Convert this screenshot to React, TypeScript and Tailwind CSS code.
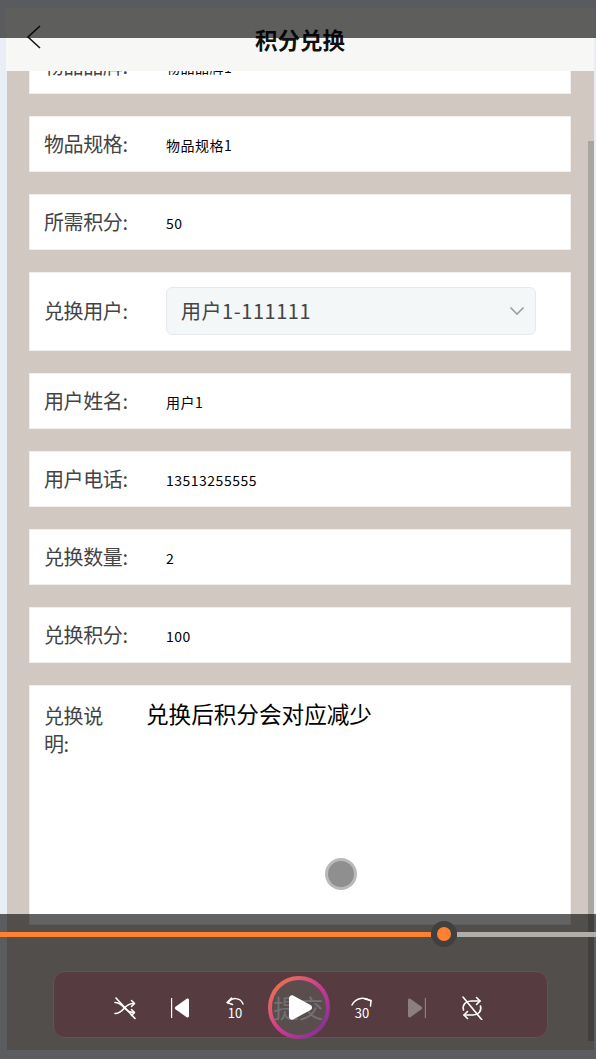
const labelFont = { fontFamily: '"Noto Sans CJK SC", sans-serif' };

const rowsBefore = [
  { label: '物品品牌:', value: '物品品牌1' },
  { label: '物品规格:', value: '物品规格1' },
  { label: '所需积分:', value: '50' },
];
const rowsAfter = [
  { label: '用户姓名:', value: '用户1' },
  { label: '用户电话:', value: '13513255555' },
  { label: '兑换数量:', value: '2' },
  { label: '兑换积分:', value: '100' },
];

function Row({ label, value }: { label: string; value: string }) {
  return (
    <div className="flex h-[56px] items-center border border-[#f1eeeb] bg-white pl-[14px]">
      <span className="w-[122px] shrink-0 text-[20px] tracking-[-0.4px] text-[#444]">{label}</span>
      <span className="pt-[3px] text-[14px] tracking-[0.5px] text-black">{value}</span>
    </div>
  );
}

function Shuffle() {
  return (
    <svg width="24" height="24" viewBox="0 0 24 24" fill="none" stroke="white" strokeWidth="1.6" strokeLinecap="round" strokeLinejoin="round">
      <path d="M2 6.5c4 0 6 1.5 9 5s5 5 10 5" />
      <path d="M2 17.5c4 0 6-1.5 9-5s5-5 10-5" />
      <path d="M18.5 4.5l3 3-3 3" />
      <path d="M18.5 13.5l3 3-3 3" />
      <path d="M3 2l19 20.5" />
    </svg>
  );
}

function Prev() {
  return (
    <svg width="18" height="20" viewBox="0 0 18 20" fill="white">
      <rect x="0" y="0" width="1.2" height="20" />
      <path d="M18 2c0-1.2-1.3-1.9-2.3-1.2L4.5 8.8a1.5 1.5 0 0 0 0 2.4l11.2 8c1 .7 2.3 0 2.3-1.2z" />
    </svg>
  );
}

function Next() {
  return (
    <svg width="18" height="20" viewBox="0 0 18 20" fill="#8d7f80">
      <path d="M0 2C0 .8 1.3.1 2.3.8l11.2 8a1.5 1.5 0 0 1 0 2.4l-11.2 8C1.3 19.9 0 19.2 0 18z" />
      <rect x="16.8" y="0" width="1.2" height="20" />
    </svg>
  );
}

function Back10() {
  return (
    <svg width="24" height="27" viewBox="0 0 24 27" fill="none" stroke="white" strokeWidth="1.5" strokeLinecap="round" strokeLinejoin="round">
      <path d="M5 9C9 3 17 3 20 10" />
      <path d="M8.5 4 4 8.5l5.5 2" />
      <text x="12" y="23.5" textAnchor="middle" fill="white" stroke="none" fontSize="13" style={labelFont}>10</text>
    </svg>
  );
}

function Forward30() {
  return (
    <svg width="24" height="27" viewBox="0 0 24 27" fill="none" stroke="white" strokeWidth="1.5" strokeLinecap="round" strokeLinejoin="round">
      <path d="M2 11C6 3 15 3 21 7" />
      <path d="M15 5l6 1.5L20.5 12" />
      <text x="12" y="23.5" textAnchor="middle" fill="white" stroke="none" fontSize="13" style={labelFont}>30</text>
    </svg>
  );
}

function Repeat() {
  return (
    <svg width="24" height="24" viewBox="0 0 24 24" fill="none" stroke="white" strokeWidth="1.6" strokeLinecap="round" strokeLinejoin="round">
      <path d="M3.5 14C2 8.5 6 5 11 5h9" />
      <path d="M16.5 1.5 20 5l-3.5 3.5" />
      <path d="M20.5 10c1.500 5.500-2.500 9-7.500 9H4" />
      <path d="M7.5 15.500 4 19l3.500 3.500" />
      <path d="M3 1l19 23" />
    </svg>
  );
}

function IconSlot({ children }: { children: React.ReactNode }) {
  return <div className="flex w-[45px] items-center justify-center">{children}</div>;
}

export default function App() {
  return (
    <div className="relative h-[1059px] w-[596px] overflow-hidden bg-[#e9eef6] pt-2 pr-[2px] pl-[6px]" style={labelFont}>
      <div className="flex h-[1042px] flex-col overflow-hidden">
        {/* header */}
        <div className="relative flex h-[63px] shrink-0 items-center justify-center bg-[#f7f7f5] pt-[3px]">
          <svg className="absolute top-[17px] left-[20px]" width="16" height="24" viewBox="0 0 16 24" fill="none" stroke="#111" strokeWidth="1.5">
            <path d="M14 1 2 12l12 11" />
          </svg>
          <h1 className="-translate-y-px text-[22.5px] font-bold text-[#111]">积分兑换</h1>
        </div>

        {/* form, scrolled so the first row sits under the header */}
        <div className="relative ml-px min-h-0 flex-1 overflow-hidden bg-[#d0c8c1] pr-[23px] pl-[22px]">
          <div className="absolute top-[70px] right-0 h-[900px] w-[6px] bg-[#a9a79f]" />
          <div className="-mt-[33px] flex flex-col gap-[22px]">
            {rowsBefore.map(r => <Row key={r.label} {...r} />)}
            <div className="flex h-[79px] items-center border border-[#f1eeeb] bg-white pb-[2px] pl-[14px]">
              <span className="w-[122px] shrink-0 text-[20px] tracking-[-0.4px] text-[#444]">兑换用户:</span>
              <div className="flex h-[48px] w-[370px] items-center justify-between rounded-md border border-[#e6eaec] bg-[#f3f7f8] pr-[10px] pl-[14px] text-[20px] tracking-[0.55px] text-[#444]">
                <span>用户1-111111</span>
                <svg width="16" height="10" viewBox="0 0 16 10" fill="none" stroke="#9a9fa3" strokeWidth="1.6">
                  <path d="M1.5 1.5 8 8l6.5-6.5" />
                </svg>
              </div>
            </div>
            {rowsAfter.map(r => <Row key={r.label} {...r} />)}
            <div className="flex h-[240px] items-start border border-[#f1eeeb] bg-white pt-[16px] pl-[14px]">
              <span className="w-[62px] shrink-0 text-[20px] leading-[28px] tracking-[-0.4px] text-[#444]">兑换说明:</span>
              <span className="ml-[40px] -translate-y-[3px] text-[22.6px] leading-[30px] text-black">兑换后积分会对应减少</span>
            </div>
          </div>
        </div>
      </div>

      {/* touch indicator */}
      <div className="absolute top-[858px] left-[325px] flex h-8 w-8 items-center justify-center rounded-full bg-[#b9b9b9]">
        <div className="h-[26px] w-[26px] rounded-full bg-[#8f8f8f]" />
      </div>

      {/* media player overlay */}
      <div className="absolute top-0 right-0 left-0 h-[38px] bg-black/[.62]" />
      <div className="absolute right-0 bottom-0 left-0 flex h-[145px] flex-col bg-black/[.61]">
        <div className="relative mt-[18px] flex h-[5px] items-center">
          <div className="h-[5px] w-[431px] bg-[#ff8030]" />
          <div className="ml-[26px] h-[5px] flex-1 bg-[#b0aea9]" />
          <div className="absolute top-[-11px] left-[431px] flex h-[26px] w-[26px] items-center justify-center rounded-full bg-[#404040]">
            <div className="h-[14px] w-[14px] rounded-full bg-[#ff8030]" />
          </div>
        </div>
        <div className="mt-[34px] mr-[48px] ml-[53px] flex h-[67px] items-center justify-center rounded-xl border border-[#62534f] bg-[#563c40] pt-[6px] pr-1">
          <IconSlot><Shuffle /></IconSlot>
          <div className="w-[10px]" />
          <IconSlot><Prev /></IconSlot>
          <div className="w-[10px]" />
          <IconSlot><Back10 /></IconSlot>
          <div className="w-[10px]" />
          <div className="flex h-[63px] w-[62px] items-center justify-center rounded-full bg-gradient-to-br from-[#f57c1f] via-[#d0398f] to-[#6f2a95]">
            <div className="relative flex h-[55px] w-[54px] items-center justify-center overflow-hidden rounded-full bg-[#5a4d4e] text-[25px] whitespace-nowrap text-[#727272]">
              提交
              <svg className="absolute top-[15px] left-[17px]" width="23" height="25" viewBox="0 0 23 25" fill="white">
                <path d="M0 3.5C0 1 2.5-.5 4.5.7L21.5 10c2 1.2 2 3.8 0 5L4.5 24.3C2.5 25.5 0 24 0 21.5z" />
              </svg>
            </div>
          </div>
          <div className="w-[10px]" />
          <IconSlot><Forward30 /></IconSlot>
          <div className="w-[10px]" />
          <IconSlot><Next /></IconSlot>
          <div className="w-[10px]" />
          <IconSlot><Repeat /></IconSlot>
        </div>
      </div>
    </div>
  );
}
